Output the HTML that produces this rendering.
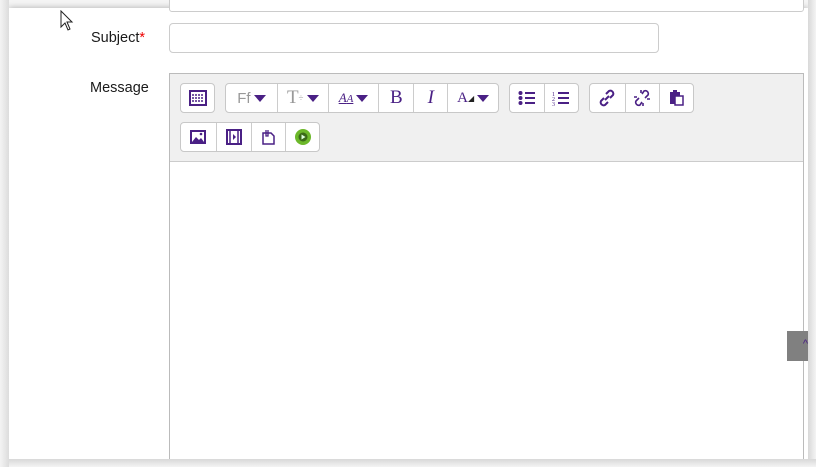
<!DOCTYPE html>
<html><head><style>
*{box-sizing:border-box}
body{margin:0;width:816px;height:467px;background:#f4f4f4;position:relative;overflow:hidden;font-family:"Liberation Sans",sans-serif}
.page{position:absolute;left:9px;top:8px;width:799px;height:451px;background:#fff;box-shadow:0 0 6px rgba(0,0,0,.3)}
.lbl{position:absolute;font-size:14.5px;color:#1a1a1a}
.inp{position:absolute;border:1px solid #ccc;border-radius:4px;background:#fff}
.ed{position:absolute;left:169px;top:73px;width:635px;height:390px;border:1px solid #bbb;border-bottom:none;background:#fff}
.tb{position:absolute;left:0;top:0;width:100%;height:88px;background:#f0f0f0;border-bottom:1px solid #ccc}
.g{position:absolute;height:30px;border:1px solid #c8c8c8;border-radius:4px;background:#fff;display:flex}
.b{height:100%;border-left:1px solid #ccc;display:flex;align-items:center;justify-content:center;color:#4a2085;font-family:"Liberation Serif",serif;font-size:19px}
.b:first-child{border-left:none}
.tri{display:inline-block;width:0;height:0;border-left:6px solid transparent;border-right:6px solid transparent;border-top:7px solid #4a2085;margin-left:3px}
</style></head><body>
<div class="page"></div>
<div class="inp" style="left:169px;top:-4px;width:635px;height:16px;border-radius:0 0 3px 3px"></div>
<div class="lbl" style="left:91px;top:30px">Subject<span style="color:#e00">*</span></div>
<div class="inp" style="left:169px;top:23px;width:490px;height:30px"></div>
<div class="lbl" style="left:90px;top:80px">Message</div>
<svg style="position:absolute;left:60px;top:10px" width="14" height="22"><path d="M1 1 L1 17 L5 13 L8 20 L10 19 L7 12 L12 12 Z" fill="#fff" stroke="#222" stroke-width="1"/></svg>
<div class="ed"><div class="tb">
<div class="g" style="left:10px;top:9px;width:35px"><div class="b" style="width:33px"><svg width="18" height="16"><rect x="1" y="1" width="16" height="14" fill="none" stroke="#4a2085" stroke-width="2"/><path d="M3 5h12M3 8h12M3 11h12" stroke="#4a2085" stroke-width="1.5" stroke-dasharray="2 1"/></svg></div></div>
<div class="g" style="left:55px;top:9px;width:274px">
<div class="b" style="width:51px;color:#999;font-family:'Liberation Sans';font-size:15px">Ff<span class="tri"></span></div>
<div class="b" style="width:51px;color:#999">T<span style="font-size:9px">÷</span><span class="tri"></span></div>
<div class="b" style="width:51px;font-size:13px"><u><i>A<span style="font-size:11px">A</span></i></u><span class="tri"></span></div>
<div class="b" style="width:35px">B</div>
<div class="b" style="width:34px;font-style:italic">I</div>
<div class="b" style="width:51px;font-size:15px">A<span style="font-size:8px;color:#222">◢</span><span class="tri"></span></div>
</div>
<div class="g" style="left:339px;top:9px;width:70px">
<div class="b" style="width:34px"><svg width="18" height="16"><circle cx="2.5" cy="3" r="2" fill="#4a2085"/><circle cx="2.5" cy="8" r="2" fill="#4a2085"/><circle cx="2.5" cy="13" r="2" fill="#4a2085"/><path d="M7 3h10M7 8h10M7 13h10" stroke="#4a2085" stroke-width="2"/></svg></div>
<div class="b" style="width:35px"><svg width="18" height="16"><text x="0" y="6" font-size="6" fill="#4a2085">1</text><text x="0" y="11" font-size="6" fill="#4a2085">2</text><text x="0" y="16" font-size="6" fill="#4a2085">3</text><path d="M6 3h11M6 8h11M6 13h11" stroke="#4a2085" stroke-width="2"/></svg></div>
</div>
<div class="g" style="left:419px;top:9px;width:105px">
<div class="b" style="width:35px"><svg width="18" height="18"><path d="M8 5l3-3a3 3 0 0 1 4 4l-3 3M10 13l-3 3a3 3 0 0 1-4-4l3-3M7 11l4-4" stroke="#4a2085" stroke-width="2" fill="none"/></svg></div>
<div class="b" style="width:35px"><svg width="18" height="18"><path d="M9 5l2-3a3 3 0 0 1 4 4l-3 3M9 13l-2 3a3 3 0 0 1-4-4l3-3M8 1v3M1 8h3M14 10h3M10 14v3" stroke="#4a2085" stroke-width="1.6" fill="none"/></svg></div>
<div class="b" style="width:34px"><svg width="16" height="18"><rect x="1" y="3" width="10" height="12" fill="#4a2085"/><rect x="4" y="1" width="4" height="3" fill="#4a2085"/><rect x="6" y="7" width="8" height="9" fill="#fff" stroke="#4a2085" stroke-width="1.5"/></svg></div>
</div>
<div class="g" style="left:10px;top:48px;width:140px">
<div class="b" style="width:35px"><svg width="16" height="14"><rect x="1" y="1" width="14" height="12" fill="none" stroke="#4a2085" stroke-width="2"/><path d="M2 12l4-5 3 3 2-2 3 4z" fill="#4a2085"/><circle cx="11" cy="4" r="1.3" fill="#4a2085"/></svg></div>
<div class="b" style="width:35px"><svg width="16" height="16"><rect x="1" y="1" width="14" height="14" fill="none" stroke="#4a2085" stroke-width="2"/><path d="M4 1v14M12 1v14" stroke="#4a2085" stroke-width="1.5"/><path d="M7 5l3 3-3 3z" fill="#4a2085"/></svg></div>
<div class="b" style="width:35px"><svg width="14" height="16"><path d="M2 4h8l3 3v8H2z" fill="none" stroke="#4a2085" stroke-width="1.5"/><path d="M5 1v6h2V1" fill="none" stroke="#4a2085" stroke-width="1.3"/></svg></div>
<div class="b" style="width:34px"><svg width="18" height="18"><circle cx="9" cy="9" r="8" fill="#6cb82a"/><circle cx="9" cy="9" r="4.5" fill="#3a6a18"/><path d="M7.5 6.5l4 2.5-4 2.5z" fill="#dfd"/></svg></div>
</div>
</div></div>
<div style="position:absolute;left:787px;top:331px;width:21px;height:30px;background:#808080;color:#4a2085;font-size:11px;text-align:right;line-height:26px">^</div>
<div style="position:absolute;left:808px;top:0;width:8px;height:467px;background:linear-gradient(90deg,#d8d8d8,#f4f4f4)"></div>
<div style="position:absolute;left:0;top:459px;width:816px;height:8px;background:linear-gradient(#d8d8d8,#f4f4f4)"></div>
<div style="position:absolute;left:0;top:0;width:9px;height:467px;background:linear-gradient(270deg,#dcdcdc,#f4f4f4)"></div>
</body></html>
